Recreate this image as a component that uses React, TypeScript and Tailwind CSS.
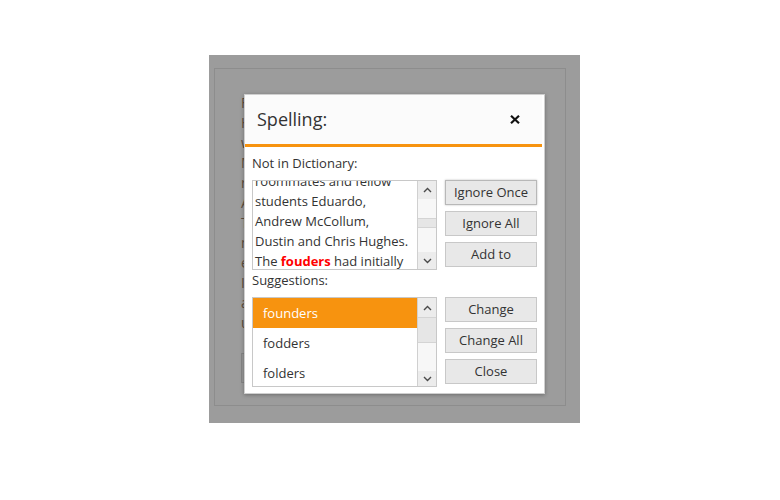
import React from "react";

const font = { fontFamily: '"Open Sans", "Noto Sans", sans-serif' };

const docLines = [
  "Facebook is an online social networking",
  "Harvard College roommates and fellow",
  "was launched on February 4, 2004",
  "Menlo Park, California. Its website",
  "roommates and fellow students",
  "Andrew McCollum, Dustin Moskovitz",
  "The fouders had initially limited",
  "membership to Harvard students",
  "expanded it to colleges in Boston",
  "Ivy League and Stanford University",
  "and gradually most universities",
  "users after registering to use",
];

function Chevron({ up }: { up?: boolean }) {
  return (
    <svg width="9" height="6" viewBox="0 0 9 6" className="block">
      <polyline
        points={up ? "1,5 4.5,1.5 8,5" : "1,1 4.5,4.5 8,1"}
        fill="none"
        stroke="#4a4a4a"
        strokeWidth="1.4"
      />
    </svg>
  );
}

function ScrollBar({ upH, trackA, thumb, trackB, downH }: { upH: number; trackA: number; thumb: number; trackB: number; downH: number }) {
  return (
    <div className="flex flex-col w-[19px] border-l border-[#d0d0d0] bg-[#f7f7f7] shrink-0">
      <div className="flex items-center justify-center bg-[#ececec]" style={{ height: upH }}>
        <Chevron up />
      </div>
      <div style={{ height: trackA }} />
      <div className="bg-[#e6e6e6] border-y border-[#d4d4d4]" style={{ height: thumb }} />
      <div style={{ height: trackB }} />
      <div className="flex items-center justify-center bg-[#ececec]" style={{ height: downH }}>
        <Chevron />
      </div>
    </div>
  );
}

function Btn({ label, focused }: { label: string; focused?: boolean }) {
  return (
    <button
      className={`w-[92px] h-[25px] bg-[#e8e8e8] border text-[13px] leading-none text-[#333] ${
        focused ? "border-[#b8b8b8] shadow-[0_0_2px_rgba(0,0,0,0.25)]" : "border-[#c8c8c8]"
      }`}
    >
      {label}
    </button>
  );
}

export default function App() {
  return (
    <div className="w-[780px] h-[500px] bg-white pt-[55px] pl-[209px]" style={font}>
      <div className="relative w-[371px] h-[368px] bg-[#9c9c9c] pt-[13px] pl-[5px]">
        <div className="w-[352px] h-[338px] border border-[#8d8d8d] pl-[26px] pt-[24px] overflow-hidden">
          {docLines.map((l) => (
            <div key={l} className="h-[20px] leading-[20px] text-[14px] text-[#5e4e3e] whitespace-nowrap">
              {l}
            </div>
          ))}
          <div className="mt-[20px] w-[80px] h-[30px] border border-[#858585] bg-[#969696]" />
        </div>

        {/* dialog */}
        <div className="absolute left-[35px] top-[39px] w-[301px] bg-white border border-[#cfcfcf] shadow-[0_1px_4px_rgba(0,0,0,0.3)]">
          <div className="mr-[2px] h-[52px] bg-[#fbfbfb] border-b-[3px] border-[#f7930f] flex items-center justify-between pl-[12px] pr-[22px]">
            <span className="text-[18px] text-[#333]">Spelling:</span>
            <svg width="10" height="9" viewBox="0 0 10 9">
              <path d="M1 0.8 L9 8.2 M9 0.8 L1 8.2" stroke="#111" strokeWidth="2.2" />
            </svg>
          </div>

          <div className="px-[7px] pt-[6px] pb-[6px]">
            <div className="h-[20px] leading-[20px] text-[13px] text-[#333]">Not in Dictionary:</div>
            <div className="flex gap-[8px] mt-[7px]">
              <div className="flex w-[186px] h-[90px] border border-[#c8c8c8]">
                <div className="flex-1 overflow-hidden pl-[2px]">
                  <div className="-mt-[10px] text-[13px] leading-[20px] text-[#333] whitespace-nowrap">
                    <div>roommates and fellow</div>
                    <div>students Eduardo,</div>
                    <div>Andrew McCollum,</div>
                    <div>Dustin and Chris Hughes.</div>
                    <div>
                      The <span className="font-bold text-[#ff0000]">fouders</span> had initially
                    </div>
                  </div>
                </div>
                <ScrollBar upH={18} trackA={19} thumb={10} trackB={24} downH={17} />
              </div>
              <div className="flex flex-col gap-[6px]">
                <Btn label="Ignore Once" focused />
                <Btn label="Ignore All" />
                <Btn label="Add to" />
              </div>
            </div>

            <div className="h-[20px] leading-[20px] text-[13px] text-[#333]">Suggestions:</div>
            <div className="flex gap-[8px] mt-[7px]">
              <div className="flex w-[186px] h-[90px] border border-[#c8c8c8]">
                <div className="flex-1 overflow-hidden text-[13px] text-[#333]">
                  <div className="h-[30px] leading-[30px] pl-[10px] bg-[#f7930f] text-white">founders</div>
                  <div className="h-[30px] leading-[30px] pl-[10px]">fodders</div>
                  <div className="h-[30px] leading-[30px] pl-[10px]">folders</div>
                </div>
                <ScrollBar upH={19} trackA={0} thumb={26} trackB={28} downH={15} />
              </div>
              <div className="flex flex-col gap-[6px]">
                <Btn label="Change" />
                <Btn label="Change All" />
                <Btn label="Close" />
              </div>
            </div>
          </div>
        </div>
      </div>
    </div>
  );
}
